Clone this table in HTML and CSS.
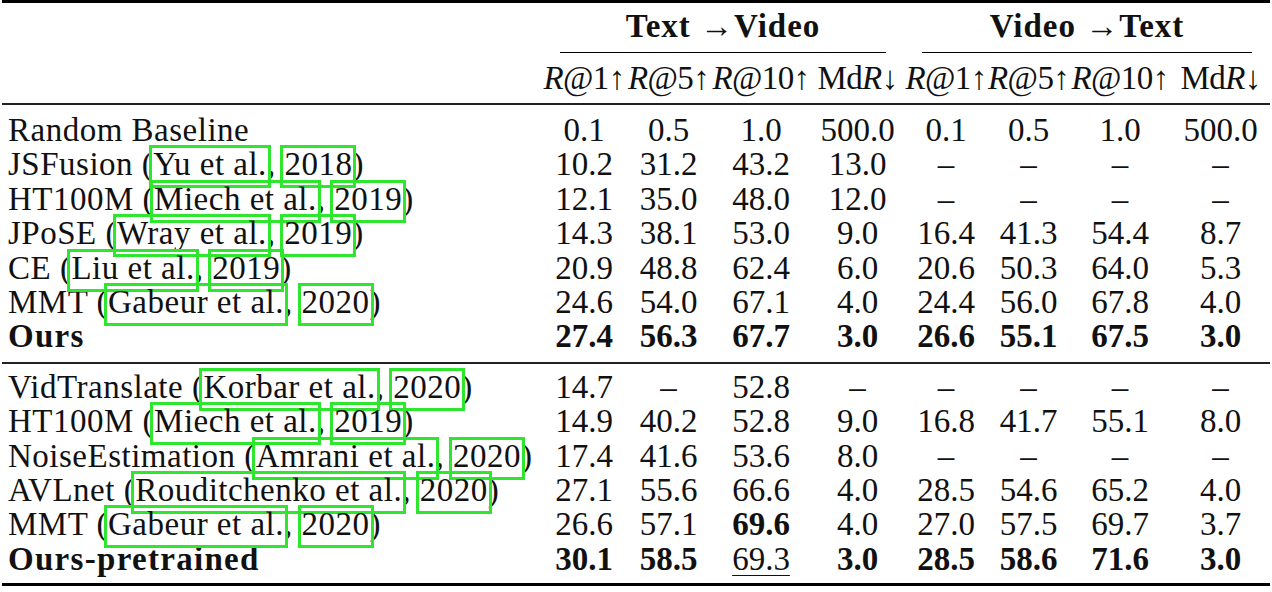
FILE: index.html
```html
<!DOCTYPE html>
<html lang="en">
<head>
    <meta charset="UTF-8">
    <meta name="viewport" content="width=device-width, initial-scale=1.0">
    <title>Text-Video Retrieval Results</title>
    <link rel="stylesheet" href="styles.css">
</head>
<body>
    <table class="results">
        <colgroup>
            <col class="col-method">
            <col class="col-r1">
            <col class="col-r5">
            <col class="col-r10">
            <col class="col-md">
            <col class="col-r1b">
            <col class="col-r5b">
            <col class="col-r10b">
            <col class="col-mdb">
        </colgroup>
        <thead>
            <tr class="group-row">
                <th></th>
                <th colspan="4"><div class="group">Text →Video</div></th>
                <th colspan="4"><div class="group">Video →Text</div></th>
            </tr>
            <tr class="metric-row">
                <th></th>
                <th><i>R</i>@1↑</th>
                <th><i>R</i>@5↑</th>
                <th><i>R</i>@10↑</th>
                <th>Md<i>R</i>↓</th>
                <th><i>R</i>@1↑</th>
                <th><i>R</i>@5↑</th>
                <th><i>R</i>@10↑</th>
                <th>Md<i>R</i>↓</th>
            </tr>
        </thead>
        <tbody class="section">
            <tr>
                <td>Random Baseline</td>
                <td>0.1</td><td>0.5</td><td>1.0</td><td>500.0</td>
                <td>0.1</td><td>0.5</td><td>1.0</td><td>500.0</td>
            </tr>
            <tr>
                <td>JSFusion (<span class="cite">Yu et al.</span>, <span class="cite">2018</span>)</td>
                <td>10.2</td><td>31.2</td><td>43.2</td><td>13.0</td>
                <td>–</td><td>–</td><td>–</td><td>–</td>
            </tr>
            <tr>
                <td>HT100M (<span class="cite">Miech et al.</span>, <span class="cite">2019</span>)</td>
                <td>12.1</td><td>35.0</td><td>48.0</td><td>12.0</td>
                <td>–</td><td>–</td><td>–</td><td>–</td>
            </tr>
            <tr>
                <td>JPoSE (<span class="cite">Wray et al.</span>, <span class="cite">2019</span>)</td>
                <td>14.3</td><td>38.1</td><td>53.0</td><td>9.0</td>
                <td>16.4</td><td>41.3</td><td>54.4</td><td>8.7</td>
            </tr>
            <tr>
                <td>CE (<span class="cite">Liu et al.</span>, <span class="cite">2019</span>)</td>
                <td>20.9</td><td>48.8</td><td>62.4</td><td>6.0</td>
                <td>20.6</td><td>50.3</td><td>64.0</td><td>5.3</td>
            </tr>
            <tr>
                <td>MMT (<span class="cite">Gabeur et al.</span>, <span class="cite">2020</span>)</td>
                <td>24.6</td><td>54.0</td><td>67.1</td><td>4.0</td>
                <td>24.4</td><td>56.0</td><td>67.8</td><td>4.0</td>
            </tr>
            <tr class="ours">
                <td>Ours</td>
                <td>27.4</td><td>56.3</td><td>67.7</td><td>3.0</td>
                <td>26.6</td><td>55.1</td><td>67.5</td><td>3.0</td>
            </tr>
        </tbody>
        <tbody class="section pretrained">
            <tr>
                <td>VidTranslate (<span class="cite">Korbar et al.</span>, <span class="cite">2020</span>)</td>
                <td>14.7</td><td>–</td><td>52.8</td><td>–</td>
                <td>–</td><td>–</td><td>–</td><td>–</td>
            </tr>
            <tr>
                <td>HT100M (<span class="cite">Miech et al.</span>, <span class="cite">2019</span>)</td>
                <td>14.9</td><td>40.2</td><td>52.8</td><td>9.0</td>
                <td>16.8</td><td>41.7</td><td>55.1</td><td>8.0</td>
            </tr>
            <tr>
                <td>NoiseEstimation (<span class="cite">Amrani et al.</span>, <span class="cite">2020</span>)</td>
                <td>17.4</td><td>41.6</td><td>53.6</td><td>8.0</td>
                <td>–</td><td>–</td><td>–</td><td>–</td>
            </tr>
            <tr>
                <td>AVLnet (<span class="cite">Rouditchenko et al.</span>, <span class="cite">2020</span>)</td>
                <td>27.1</td><td>55.6</td><td>66.6</td><td>4.0</td>
                <td>28.5</td><td>54.6</td><td>65.2</td><td>4.0</td>
            </tr>
            <tr>
                <td>MMT (<span class="cite">Gabeur et al.</span>, <span class="cite">2020</span>)</td>
                <td>26.6</td><td>57.1</td><td><b>69.6</b></td><td>4.0</td>
                <td>27.0</td><td>57.5</td><td>69.7</td><td>3.7</td>
            </tr>
            <tr class="ours">
                <td>Ours-pretrained</td>
                <td>30.1</td><td>58.5</td><td><u class="second">69.3</u></td><td>3.0</td>
                <td>28.5</td><td>58.6</td><td>71.6</td><td>3.0</td>
            </tr>
        </tbody>
    </table>
</body>
</html>
```

FILE: styles.css
```css
body {
    margin: 0;
    padding: 0 0 0 2px;
    background: #ffffff;
    color: #111;
    font-family: 'Liberation Serif', 'Times New Roman', serif;
    font-size: 33px;
}

.results {
    width: 1268px;
    table-layout: fixed;
    border-collapse: separate;
    border-spacing: 0;
    border-top: 3px solid #000;
    border-bottom: 3px solid #000;
}

.col-method { width: 540px; }
.col-r1 { width: 84px; }
.col-r5 { width: 85px; }
.col-r10 { width: 100px; }
.col-md { width: 93px; }
.col-r1b { width: 84px; }
.col-r5b { width: 81px; }
.col-r10b { width: 102px; }
.col-mdb { width: 99px; }

th, td {
    padding: 0;
    text-align: center;
    white-space: nowrap;
    font-weight: normal;
}

/* group headers with trimmed rules underneath */
.group-row th {
    font-weight: bold;
    letter-spacing: 1px;
}

.group {
    margin: 0 18px;
    padding: 3px 0 6px;
    line-height: 40px;
    border-bottom: 1px solid #000;
}

.metric-row th {
    padding: 5px 0;
    line-height: 40px;
    letter-spacing: -0.6px;
    border-bottom: 2px solid #222;
}

td {
    line-height: 34.4px;
}

td:first-child {
    text-align: left;
    padding-left: 6px;
    letter-spacing: 0.5px;
}

.section tr:first-child td {
    padding-top: 8px;
}

.section tr:last-child td {
    padding-bottom: 8px;
}

.pretrained tr:first-child td {
    padding-top: 6px;
    border-top: 2px solid #222;
}

.pretrained tr:last-child td {
    padding-bottom: 7px;
}

.ours td {
    font-weight: bold;
}

.ours td:first-child {
    letter-spacing: 1.3px;
}

/* link boxes drawn over the citation text */
.cite {
    position: relative;
}

.cite::after {
    content: "";
    position: absolute;
    left: -4px;
    right: -4px;
    top: -1px;
    bottom: -6px;
    border: 3px solid #2ee62e;
}

.ours .second {
    font-weight: normal;
    text-decoration-thickness: 1px;
    text-underline-offset: 5px;
}
```
